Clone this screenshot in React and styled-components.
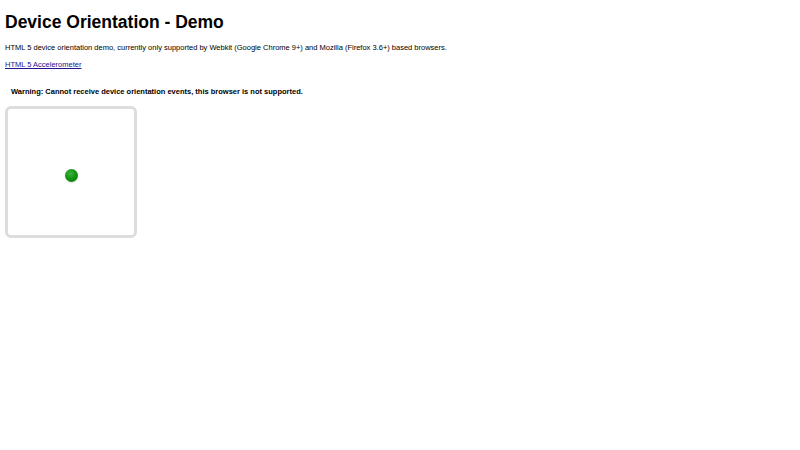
import React from "react";
import styled, { createGlobalStyle } from "styled-components";

const GlobalStyle = createGlobalStyle`
    html, body {
        margin: 0;
        padding: 0;
        background: #ffffff;
    }
    body {
        font-family: "Liberation Sans", Arial, sans-serif;
        color: #000;
    }
`;

const Page = styled.div`
    padding: 5px;
    display: flex;
    flex-direction: column;
    align-items: flex-start;
`;

const Title = styled.h1`
    font-size: 17.5px;
    font-weight: bold;
    margin: 7px 0 11px;
    line-height: 20px;
`;

const Intro = styled.p`
    font-size: 7.5px;
    margin: 0 0 7px;
    line-height: 10px;
`;

const Link = styled.a`
    font-size: 7.5px;
    line-height: 10px;
    color: #22138f;
    text-decoration: underline;
`;

const Warning = styled.div`
    font-size: 7.5px;
    font-weight: bold;
    line-height: 10px;
    padding: 0 6px;
    margin: 17px 0 9px;
`;

const Board = styled.div`
    width: 126px;
    height: 126px;
    border: 3px solid #dddddd;
    border-radius: 6px;
    display: flex;
    align-items: center;
    justify-content: center;
`;

const Ball = styled.div`
    width: 13px;
    height: 13px;
    margin-top: 6px;
    border-radius: 50%;
    background: radial-gradient(circle at 40% 35%, #3cb43c 0%, #149614 45%, #077007 100%);
    box-shadow: 0 1px 2px rgba(0, 0, 0, 0.12);
`;

export default function App() {
    return (
        <>
            <GlobalStyle />
            <Page>
                <Title>Device Orientation - Demo</Title>
                <Intro>
                    HTML 5 device orientation demo, currently only supported by Webkit (Google Chrome 9+) and
                    Mozilla (Firefox 3.6+) based browsers.
                </Intro>
                <Link href="#">HTML 5 Accelerometer</Link>
                <Warning>Warning: Cannot receive device orientation events, this browser is not supported.</Warning>
                <Board>
                    <Ball />
                </Board>
            </Page>
        </>
    );
}
